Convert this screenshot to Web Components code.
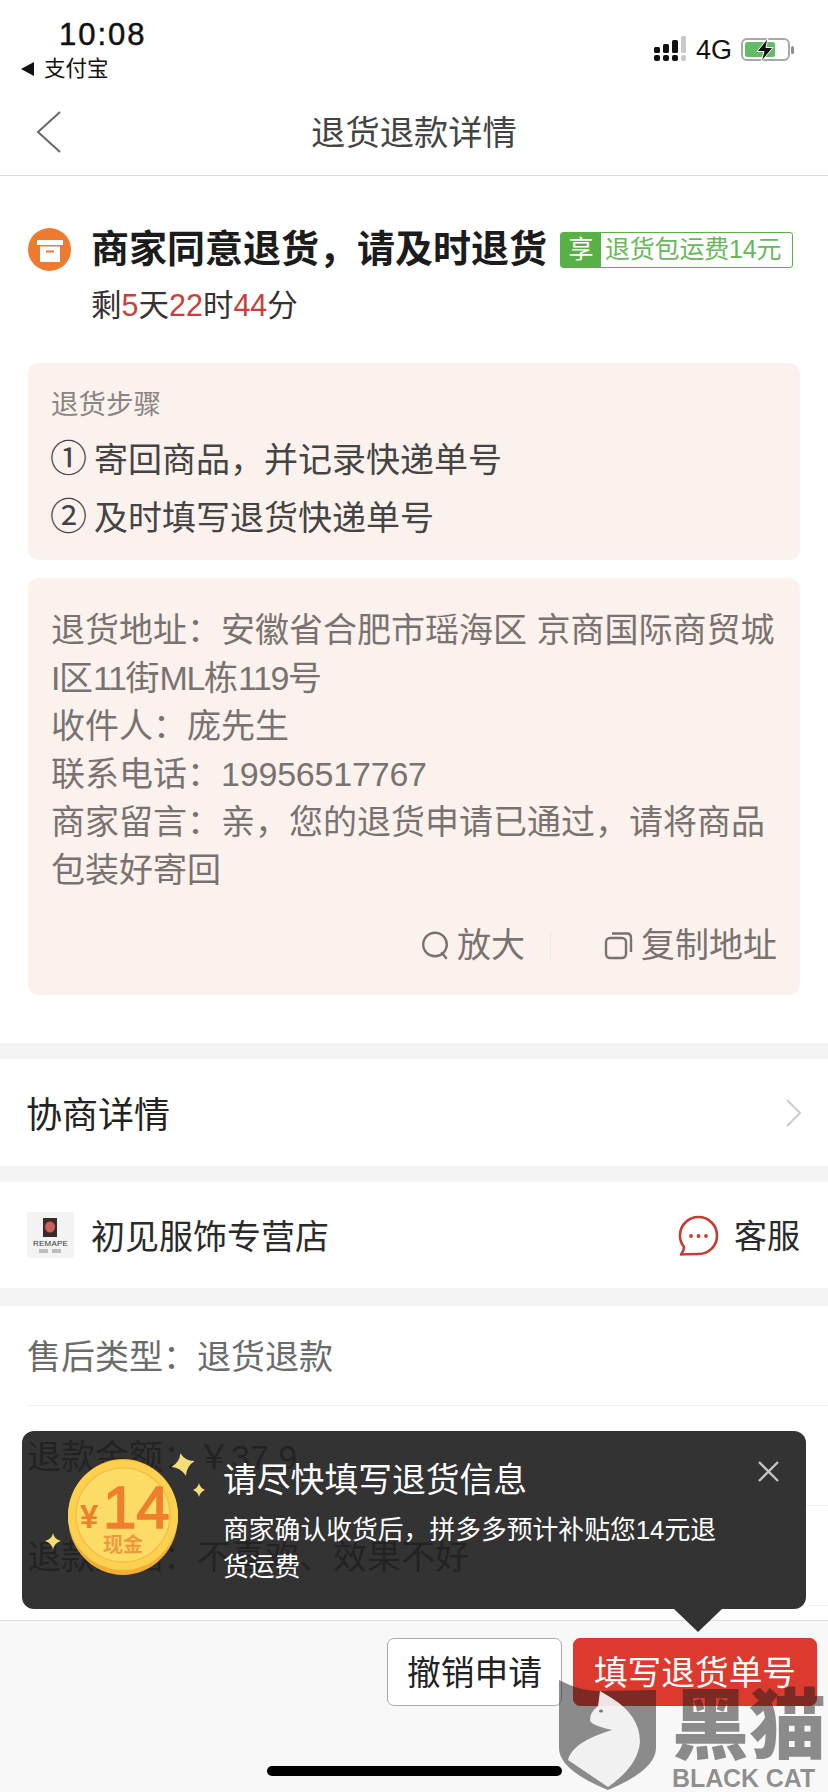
<!DOCTYPE html>
<html lang="zh-CN">
<head>
<meta charset="utf-8">
<title>退货退款详情</title>
<style>
  html, body { margin: 0; padding: 0; background: #fff; }
  body { font-family: "Liberation Sans", "Noto Sans CJK SC", sans-serif; }
  .narrow { letter-spacing: -1.4px; }
  .phone { letter-spacing: -.2px; }
</style>
</head>
<body>
<refund-page>
  <status-bar></status-bar>
  <nav-bar>退货退款详情</nav-bar>
  <refund-status>
    <step-card heading="退货步骤">
      <step-line num="①">寄回商品&#xFF0C;并记录快递单号</step-line>
      <step-line num="②">及时填写退货快递单号</step-line>
    </step-card>
    <address-card>
      <div>退货地址&#xFF1A;安徽省合肥市瑶海区 京商国际商贸城<br><span class="narrow">I</span>区<span class="narrow">11</span>街<span class="narrow">ML</span>栋<span class="narrow">119</span>号</div>
      <div>收件人&#xFF1A;庞先生</div>
      <div>联系电话&#xFF1A;<span class="phone">19956517767</span></div>
      <div>商家留言&#xFF1A;亲&#xFF0C;您的退货申请已通过&#xFF0C;请将商品<br>包装好寄回</div>
    </address-card>
  </refund-status>
  <link-row>协商详情</link-row>
  <store-row>初见服饰专营店</store-row>
  <detail-row>售后类型&#xFF1A;退货退款</detail-row>
  <detail-row>退款金额&#xFF1A;&#xFFE5;37.9</detail-row>
  <detail-row>退款原因&#xFF1A;不喜欢&#x3001;效果不好</detail-row>
  <bottom-bar></bottom-bar>
  <toast-tip heading="请尽快填写退货信息">商家确认收货后&#xFF0C;拼多多预计补贴您14元退货运费</toast-tip>
  <black-cat-mark></black-cat-mark>
</refund-page>

<script>
function defineEl(name, html, observed) {
  class El extends HTMLElement {
    constructor() {
      super();
      this.attachShadow({ mode: 'open' });
      var out = html;
      (observed || []).forEach((a) => {
        out = out.split('{{' + a + '}}').join(this.getAttribute(a) || '');
      });
      this.shadowRoot.innerHTML = out;
    }
  }
  customElements.define(name, El);
}

var CJK = '"Liberation Sans", "Noto Sans CJK SC", sans-serif';

defineEl('refund-page', `
  <style>
    :host {
      display: block;
      position: relative;
      width: 828px;
      height: 1792px;
      overflow: hidden;
      background: #fff;
      font-family: ${CJK};
    }
  </style>
  <slot></slot>
`);

defineEl('status-bar', `
  <style>
    :host { display: flex; justify-content: space-between; height: 80px; color: #111; }
    .left { padding: 18px 0 0 21px; }
    .time { font-size: 31px; line-height: 34px; margin-left: 38px; letter-spacing: 2px; -webkit-text-stroke: .5px #111; }
    .app { display: flex; align-items: center; font-size: 21.5px; line-height: 26px; margin-top: 4px; }
    .app i { width: 0; height: 0; border: 7px solid transparent; border-left: 0; border-right: 13px solid #111; margin-right: 10px; }
    .right { display: flex; align-items: flex-start; padding: 35px 33px 0 0; }
    .net { font-size: 27px; line-height: 26px; margin: 2px 9px 0 9px; }
  </style>
  <div class="left">
    <div class="time">10:08</div>
    <div class="app"><i></i>支付宝</div>
  </div>
  <div class="right">
    <svg width="34" height="27" viewBox="0 0 34 27">
      <g fill="#111">
        <rect x="1" y="12" width="6" height="6" rx="1.5"/><rect x="1" y="20" width="6" height="6" rx="2"/>
        <rect x="10" y="9" width="6" height="9" rx="1.5"/><rect x="10" y="20" width="6" height="6" rx="2"/>
        <rect x="19" y="5" width="6" height="13" rx="1.5"/><rect x="19" y="20" width="6" height="6" rx="2"/>
      </g>
      <g fill="#c9c9c9">
        <rect x="28" y="1" width="5" height="17" rx="1.5"/><rect x="28" y="20" width="5" height="6" rx="2"/>
      </g>
    </svg>
    <span class="net">4G</span>
    <svg width="54" height="26" viewBox="0 0 54 26" style="margin-top:2px">
      <rect x="1" y="2" width="47" height="21" rx="5" fill="#fff" stroke="#a8a8a8" stroke-width="2"/>
      <rect x="4" y="5" width="30" height="15" rx="2.5" fill="#63bb64"/>
      <rect x="50" y="9" width="3" height="8" rx="1.5" fill="#8f8f8f"/>
      <path d="M27 1 L16 14.5 L23 14.5 L20 25 L32 10.5 L25 10.5 Z" fill="#111" stroke="#fff" stroke-width="1"/>
    </svg>
  </div>
`);

defineEl('nav-bar', `
  <style>
    :host {
      display: flex;
      align-items: center;
      justify-content: center;
      position: relative;
      box-sizing: border-box;
      height: 96px;
      padding-top: 5px;
      border-bottom: 1px solid #dcdcdc;
      font-size: 34.3px;
      color: #444;
    }
    svg { position: absolute; left: 35px; top: 31px; }
  </style>
  <svg width="27" height="42" viewBox="0 0 27 42" fill="none" stroke="#666" stroke-width="2"><path d="M25 1 L3 21 L25 41"/></svg>
  <slot></slot>
`);

defineEl('refund-status', `
  <style>
    :host { display: block; padding: 52px 28px 48px; margin-bottom: 16px; background: #fff; }
    .head { display: flex; align-items: center; height: 43px; }
    svg { flex: none; margin-right: 20px; }
    h1 { margin: 0; font-size: 38px; line-height: 43px; font-weight: 700; color: #1c1c1c; white-space: nowrap; }
    .tag { display: flex; align-items: stretch; box-sizing: border-box; height: 36px; width: 233px; margin: 1px 0 0 13px; border: 1.5px solid #58b046; border-radius: 3px; font-size: 25px; line-height: 33px; color: #68b85a; white-space: nowrap; }
    .tag b { flex: none; width: 40px; background: #58b046; color: #fff; font-weight: 400; text-align: center; }
    .tag span { padding-left: 4px; letter-spacing: -.2px; }
    .left { margin: 17px 0 41px 63px; font-size: 30.5px; line-height: 34px; color: #333; }
    .left em { font-style: normal; color: #c8403a; }
    ::slotted(step-card) { margin-bottom: 18px; }
  </style>
  <div class="head">
    <svg width="43" height="43" viewBox="0 0 43 43">
      <circle cx="21.5" cy="21.5" r="21.5" fill="#ee7a2f"/>
      <rect x="9" y="12" width="26" height="5" fill="#fff"/>
      <path d="M12 18.5 H32 V34 H12 Z" fill="#fff"/>
      <rect x="18" y="22.5" width="8" height="2" fill="#ee7a2f"/>
    </svg>
    <h1>商家同意退货&#xFF0C;请及时退货</h1>
    <div class="tag"><b>享</b><span>退货包运费14元</span></div>
  </div>
  <div class="left">剩<em>5</em>天<em>22</em>时<em>44</em>分</div>
  <slot></slot>
`);

defineEl('step-card', `
  <style>
    :host { display: block; padding: 22px 23px 13px; border-radius: 10px; background: #fbf2ee; }
    .title { font-size: 27.5px; line-height: 40px; color: #8a8583; margin-bottom: 6px; }
  </style>
  <div class="title">{{heading}}</div>
  <slot></slot>
`, ['heading']);

defineEl('step-line', `
  <style>
    :host { display: flex; font-size: 34px; line-height: 58px; color: #444; white-space: nowrap; }
    .n { width: 43px; flex: none; font-size: 37px; margin-left: -1px; margin-right: 1px; }
  </style>
  <span class="n">{{num}}</span><slot></slot>
`, ['num']);

defineEl('address-card', `
  <style>
    :host { display: block; padding: 28px 23px 26px; border-radius: 10px; background: #fbf2ee; font-size: 34px; line-height: 48px; color: #7a7270; }
    .actions { display: flex; align-items: center; justify-content: flex-end; height: 48px; margin-top: 27px; }
    .actions svg { flex: none; }
    .zoom svg { margin-right: 7px; }
    .copy svg { margin-right: 8px; }
    .actions span { display: flex; align-items: center; }
    .sep { width: 1px; height: 28px; margin: 0 53px 0 25px; background: #f1e6e1; }
  </style>
  <slot></slot>
  <div class="actions">
    <span class="zoom">
      <svg width="29" height="29" viewBox="0 0 29 29" fill="none" stroke="#7a7270" stroke-width="2.4"><circle cx="14" cy="13.5" r="11.8"/><path d="M21 22 L25 27" stroke-linecap="round"/></svg>放大</span>
    <i class="sep"></i>
    <span class="copy">
      <svg width="29" height="29" viewBox="0 0 29 29" fill="none" stroke="#7a7270" stroke-width="2.4"><rect x="2" y="7" width="20" height="20" rx="4"/><path d="M8 2.5 H23 Q27 2.5 27 7 V21"/></svg>复制地址</span>
  </div>
`);

defineEl('link-row', `
  <style>
    :host { display: flex; align-items: center; justify-content: space-between; height: 107px; padding: 0 26px 0 26px; margin-bottom: 16px; background: #fff; font-size: 36px; color: #222; box-shadow: 0 -16px 0 #f4f4f4, 0 16px 0 #f4f4f4; }
    span { margin-top: -2px; }
  </style>
  <span><slot></slot></span>
  <svg width="16" height="28" viewBox="0 0 16 28" fill="none" stroke="#ccc" stroke-width="2"><path d="M1 1 L14 14 L1 27"/></svg>
`);

defineEl('store-row', `
  <style>
    :host { display: flex; align-items: center; height: 106px; padding: 0 28px 0 27px; background: #fff; font-size: 34px; color: #2a2a2a; box-shadow: 0 18px 0 #f4f4f4; margin-bottom: 18px; }
    .logo { position: relative; flex: none; width: 47px; height: 46px; margin-right: 17px; background: #f3f3f3; border-radius: 3px; }
    .logo svg { display: block; }
    .logo b { position: absolute; left: 0; right: 0; top: 27px; text-align: center; font-size: 8px; line-height: 9px; font-weight: 400; color: #333; letter-spacing: .2px; }
    .name { flex: 1; margin-top: -2px; }
    .chat { flex: none; margin-right: 15px; }
    .kf { font-size: 33px; margin-top: -2px; }
  </style>
  <div class="logo">
    <svg width="47" height="46" viewBox="0 0 47 46">
      <rect x="16" y="6" width="14" height="19" fill="#3a2a2a"/>
      <ellipse cx="23" cy="15" rx="5" ry="5.5" fill="#c9605c"/>
      <rect x="12" y="37" width="9" height="4" fill="#bdbdbd"/><rect x="25" y="37" width="9" height="4" fill="#bdbdbd"/>
    </svg>
    <b>REMAPE</b>
  </div>
  <span class="name"><slot></slot></span>
  <svg class="chat" width="41" height="41" viewBox="0 0 41 41" fill="none" stroke="#c93a33" stroke-width="2.6">
    <path d="M20.5 2 C31 2 39 10.5 39 20.5 C39 31 31 39 20.5 39 C15 39 9 39 3 39.5 C5 37 6 35 6 32 C3.5 29 2 25 2 20.5 C2 10.5 10 2 20.5 2 Z" stroke-linejoin="round"/>
    <g fill="#c93a33" stroke="none"><circle cx="13" cy="21" r="1.9"/><circle cx="20.5" cy="21" r="1.9"/><circle cx="28" cy="21" r="1.9"/></g>
  </svg>
  <span class="kf">客服</span>
`);

defineEl('detail-row', `
  <style>
    :host { display: block; margin-left: 27px; padding-top: 3px; border-bottom: 1px solid #f1f1f1; font-size: 34px; line-height: 96px; color: #6b6b6b; white-space: nowrap; }
  </style>
  <slot></slot>
`);

defineEl('bottom-bar', `
  <style>
    :host { display: flex; flex-direction: column; position: absolute; left: 0; right: 0; top: 1620px; bottom: 0; box-sizing: border-box; padding: 17px 11px 0 0; border-top: 1px solid #dcdcdc; background: #f8f8f8; }
    .btns { display: flex; justify-content: flex-end; gap: 11px; }
    .btn { box-sizing: border-box; height: 68px; border-radius: 7px; font-size: 33.7px; line-height: 69px; text-align: center; }
    .ghost { width: 175px; background: #fff; border: 1px solid #aaa; color: #222; }
    .red { width: 244px; background: #dc3a2e; border: 1px solid #dc3a2e; color: #fff; }
    .home { width: 295px; height: 10px; margin: 60px 0 0 267px; border-radius: 5px; background: #000; }
  </style>
  <div class="btns">
    <div class="btn ghost">撤销申请</div>
    <div class="btn red">填写退货单号</div>
  </div>
  <div class="home"></div>
`);

defineEl('coin-badge', `
  <style>
    :host { display: block; flex: none; width: 180px; height: 150px; }
    svg { display: block; }
    text { font-family: ${CJK}; }
  </style>
  <svg width="180" height="150" viewBox="0 0 180 150">
    <g fill="#f5dd76">
      <path d="M143 13 Q146 22 155 24 Q146 27 143 36 Q140 27 131 24 Q140 22 143 13 Z" transform="rotate(-14 143 24)"/>
      <path d="M159 43 Q160 48 165 50 Q160 52 159 57 Q158 52 153 50 Q158 48 159 43 Z"/>
      <path d="M13 93 Q14 99 21 101 Q14 103 13 110 Q12 103 5 101 Q12 99 13 93 Z"/>
    </g>
    <ellipse cx="83" cy="77" rx="55" ry="58" fill="#f3ad33"/>
    <circle cx="83" cy="75" r="55" fill="#fbd14f"/>
    <circle cx="83" cy="75" r="47" fill="#fcdc66" stroke="#f4c048" stroke-width="1.5"/>
    <text x="40" y="88" font-size="33" font-weight="700" fill="#ef7f2d">¥</text>
    <text x="63" y="88" font-size="60" fill="#ef7f2d" stroke="#ef7f2d" stroke-width="1.6">14</text>
    <text x="63" y="112" font-size="20" font-weight="700" fill="#ee9a3f">现金</text>
  </svg>
`);

defineEl('toast-tip', `
  <style>
    :host { display: flex; position: absolute; left: 22px; top: 1431px; box-sizing: border-box; width: 784px; height: 178px; padding: 9px 0 0 18px; border-radius: 12px; background: rgba(26, 26, 26, .89); color: #fff; }
    :host::after { content: ""; position: absolute; left: 652px; top: 178px; border: solid transparent; border-width: 23px 24px 0; border-top-color: #333; }
    .text { width: 505px; margin: 18px 0 0 3px; }
    .title { font-size: 33.8px; line-height: 44px; }
    .sub { margin-top: 10px; font-size: 25.8px; line-height: 37px; }
    svg { position: absolute; right: 26px; top: 30px; }
  </style>
  <coin-badge></coin-badge>
  <div class="text">
    <div class="title">{{heading}}</div>
    <div class="sub"><slot></slot></div>
  </div>
  <svg width="23" height="21" viewBox="0 0 23 21" fill="none" stroke="#c4c4c4" stroke-width="2.4"><path d="M2 1 L21 20 M21 1 L2 20"/></svg>
`, ['heading']);

defineEl('black-cat-mark', `
  <style>
    :host { display: block; position: absolute; left: 550px; top: 1670px; width: 278px; height: 122px; pointer-events: none; color: rgba(26, 26, 26, .49); }
    svg { position: absolute; left: 0; top: 0; }
    .cn { position: absolute; left: 122px; top: 8px; font-family: "Noto Sans CJK SC", sans-serif; font-size: 77px; line-height: 84px; font-weight: 900; white-space: nowrap; }
    .en { position: absolute; left: 122px; top: 95px; font-family: "Liberation Sans", sans-serif; font-size: 25px; line-height: 26px; font-weight: 700; letter-spacing: -.1px; white-space: nowrap; }
  </style>
  <svg width="278" height="122" viewBox="0 0 278 122">
    <path fill="rgba(26,26,26,.49)" d="M9 10 Q32 22 50 21 L106 20 L106 78 Q106 100 58 120 Q9 100 9 78 Z"/>
    <path fill="rgba(255,255,255,.88)" d="M50 21 L60 27 Q90 45 90 72 Q88 96 58 117 L18 90 Q22 72 62 60 Q40 55 40 50 Q40 42 48 36 Z"/>
    <ellipse cx="51" cy="41" rx="2" ry="1.5" fill="#777"/>
  </svg>
  <span class="cn">黑猫</span>
  <span class="en">BLACK CAT</span>
`);
</script>
</body>
</html>
